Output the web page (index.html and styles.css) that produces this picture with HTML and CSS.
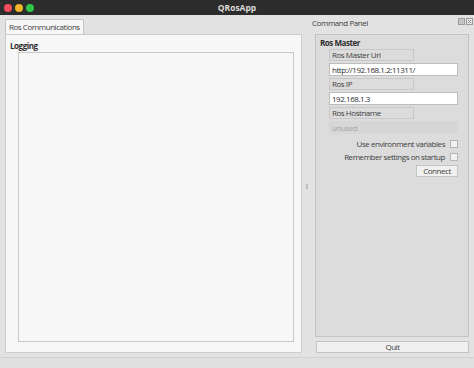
FILE: index.html
```html
<!DOCTYPE html>
<html lang="en">
<head>
    <meta charset="UTF-8">
    <title>QRosApp</title>
    <link rel="stylesheet" href="styles.css">
</head>
<body>
    <div class="window">
        <div class="titlebar">
            <div class="lights">
                <span class="light red"></span>
                <span class="light yellow"></span>
                <span class="light green"></span>
            </div>
            <div class="title">QRosApp</div>
        </div>

        <div class="main">
            <div class="left">
                <div class="tabs">
                    <div class="tab">Ros Communications</div>
                </div>
                <div class="tab-page">
                    <div class="group-title">Logging</div>
                    <div class="log-view"></div>
                </div>
            </div>

            <div class="splitter"><span class="grip"></span></div>

            <div class="dock">
                <div class="dock-head">
                    <span>Command Panel</span>
                    <span class="dock-buttons">
                        <svg width="7" height="7" viewBox="0 0 7 7"><rect x="0.5" y="0.5" width="6" height="6" fill="none" stroke="#9a9a9a"/><rect x="2" y="2" width="3" height="3" fill="none" stroke="#9a9a9a" stroke-width="0.8"/></svg>
                        <svg width="7" height="7" viewBox="0 0 7 7"><rect x="0.5" y="0.5" width="6" height="6" fill="none" stroke="#9a9a9a"/><path d="M2 2 L5 5 M5 2 L2 5" stroke="#9a9a9a"/></svg>
                    </span>
                </div>
                <div class="group-box">
                    <div class="group-title">Ros Master</div>
                    <div class="fields">
                        <div class="field-label">Ros Master Url</div>
                        <div class="line-edit">http://192.168.1.2:11311/</div>
                        <div class="field-label">Ros IP</div>
                        <div class="line-edit">192.168.1.3</div>
                        <div class="field-label">Ros Hostname</div>
                        <div class="line-edit disabled">unused</div>
                    </div>
                    <div class="check-row first">Use environment variables <span class="check"></span></div>
                    <div class="check-row">Remember settings on startup <span class="check"></span></div>
                    <div class="button-row">
                        <div class="button connect">Connect</div>
                    </div>
                </div>
                <div class="button quit">Quit</div>
            </div>
        </div>

        <div class="statusbar"></div>
    </div>
</body>
</html>
```

FILE: styles.css
```css
* {
    box-sizing: border-box;
}

body {
    margin: 0;
    font-family: "Open Sans", "DejaVu Sans", sans-serif;
    font-size: 8px;
    letter-spacing: -0.45px;
    color: #363636;
    background-color: #dcdcdc;
}

.window {
    width: 474px;
    height: 368px;
    display: flex;
    flex-direction: column;
    background-color: #e2e2e2;
}

.titlebar {
    height: 15px;
    background-color: #2c2c2c;
    position: relative;
    display: flex;
    align-items: center;
}

.lights {
    display: flex;
    gap: 3px;
    padding-left: 4px;
}

.light {
    width: 8px;
    height: 8px;
    border-radius: 50%;
}

.red { background-color: #ef4f5a; }
.yellow { background-color: #f3b32b; }
.green { background-color: #2fc84b; }

.title {
    position: absolute;
    left: 0;
    right: 0;
    text-align: center;
    color: #dcdcdc;
    font-weight: bold;
    font-size: 8.5px;
    letter-spacing: 0;
}

.main {
    flex: 1;
    display: flex;
    padding: 0 5px;
}

.left {
    width: 297px;
    padding-top: 4px;
    display: flex;
    flex-direction: column;
}

.tabs {
    height: 15px;
    display: flex;
    align-items: flex-end;
}

.tab {
    height: 15px;
    padding: 0 3px;
    line-height: 14px;
    background-color: #f7f7f7;
    border: 1px solid #c4c4c4;
    border-bottom: none;
    border-radius: 2px 2px 0 0;
    color: #404040;
}

.tab-page {
    flex: 1;
    margin-bottom: 4px;
    background-color: #f7f7f7;
    border: 1px solid #cdcdcd;
    padding: 4px 7px 10px 4px;
    display: flex;
    flex-direction: column;
}

.group-title {
    font-weight: bold;
    color: #2e2e2e;
    height: 13px;
    line-height: 13px;
}

.log-view {
    flex: 1;
    margin-left: 8px;
    border: 1px solid #c8c8c8;
    background-color: #f7f7f7;
}

.splitter {
    width: 10px;
    display: flex;
    align-items: center;
    justify-content: center;
}

.grip {
    width: 2px;
    height: 5px;
    background-color: #bcbcbc;
}

.dock {
    flex: 1;
    display: flex;
    flex-direction: column;
    padding-bottom: 4px;
}

.dock-head {
    height: 19px;
    display: flex;
    justify-content: space-between;
    align-items: flex-start;
    padding-top: 2px;
    line-height: 11px;
    color: #3e3e3e;
}

.dock-buttons {
    display: flex;
    gap: 1px;
    padding-top: 1px;
    margin-right: -4px;
}

.group-box {
    flex: 1;
    margin: 0 0 4px 3px;
    background-color: #dcdcdc;
    border: 1px solid #c4c4c4;
    padding: 2px 10px 0 4px;
}

.group-box .group-title {
    height: 12px;
    line-height: 12px;
}

.fields {
    padding-left: 9px;
    display: flex;
    flex-direction: column;
    gap: 2px;
}

.field-label {
    width: 85px;
    height: 12px;
    line-height: 10px;
    padding-left: 2px;
    border: 1px solid #c8c8c8;
    background-color: #dcdcdc;
    color: #424242;
}

.line-edit {
    height: 13px;
    line-height: 11px;
    padding-left: 2px;
    border: 1px solid #bdbdbd;
    background-color: #ffffff;
    color: #2e2e2e;
}

.line-edit.disabled {
    background-color: #d6d6d6;
    border-color: #d6d6d6;
    color: #a5a5a5;
}

.check-row {
    display: flex;
    justify-content: flex-end;
    align-items: center;
    gap: 5px;
    height: 13px;
    color: #424242;
}

.check-row.first {
    margin-top: 3px;
}

.check {
    width: 8px;
    height: 8px;
    border: 1px solid #b5b5b5;
    background-color: #f2f2f2;
}

.button-row {
    display: flex;
    justify-content: flex-end;
    margin-top: 2px;
}

.button {
    height: 12px;
    line-height: 10px;
    text-align: center;
    border: 1px solid #c4c4c4;
    background-color: #f0f0f0;
    color: #3e3e3e;
}

.connect {
    width: 42px;
}

.quit {
    margin-left: 4px;
}

.statusbar {
    height: 11px;
    border-top: 1px solid #d2d2d2;
    background-color: #e0e0e0;
}
```
